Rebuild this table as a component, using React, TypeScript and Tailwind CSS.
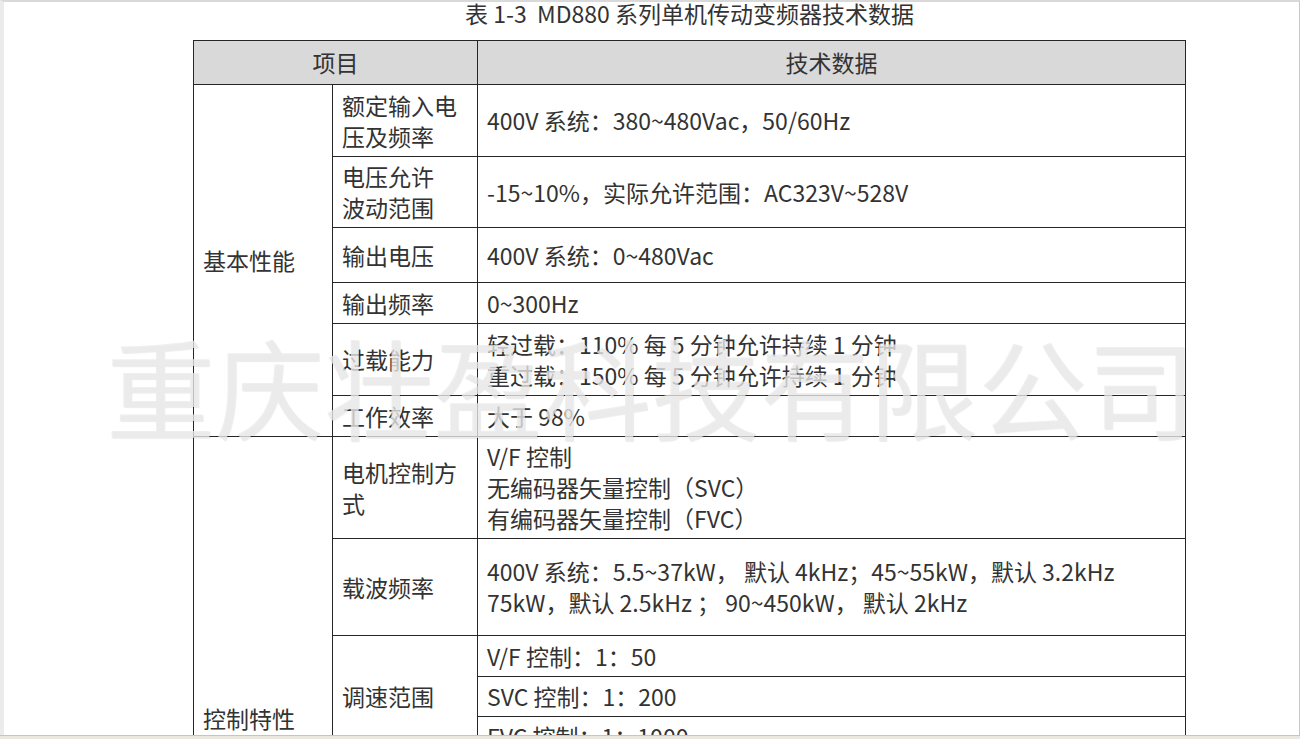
const font = { fontFamily: '"Noto Sans CJK SC", "Noto Sans", sans-serif' };

type Row = { label?: string[]; labelSpan?: number; value: string[]; h: number };

const basic: Row[] = [
  { label: ['额定输入电压及频率'], value: ['400V 系统：380~480Vac，50/60Hz'], h: 72 },
  { label: ['电压允许', '波动范围'], value: ['-15~10%，实际允许范围：AC323V~528V'], h: 71 },
  { label: ['输出电压'], value: ['400V 系统：0~480Vac'], h: 55 },
  { label: ['输出频率'], value: ['0~300Hz'], h: 41 },
  { label: ['过载能力'], value: ['轻过载：110% 每 5 分钟允许持续 1 分钟', '重过载：150% 每 5 分钟允许持续 1 分钟'], h: 72 },
  { label: ['工作效率'], value: ['大于 98%'], h: 41 },
];

const control: Row[] = [
  { label: ['电机控制方式'], value: ['V/F 控制', '无编码器矢量控制（SVC）', '有编码器矢量控制（FVC）'], h: 102 },
  { label: ['载波频率'], value: ['400V 系统：5.5~37kW， 默认 4kHz；45~55kW，默认 3.2kHz', '75kW，默认 2.5kHz ； 90~450kW， 默认 2kHz'], h: 97 },
  { label: ['调速范围'], labelSpan: 3, value: ['V/F 控制：1：50'], h: 41 },
  { value: ['SVC 控制：1：200'], h: 40 },
  { value: ['FVC 控制：1：1000'], h: 40 },
  { label: ['速度稳定', '精度'], value: ['SVC 控制：±0.2%', 'FVC 控制：±0.02%'], h: 72 },
  { label: ['转矩响应'], value: ['SVC 控制：<10ms', 'FVC 控制：<5ms'], h: 72 },
  { label: ['启动转矩'], value: ['V/F 控制：0.5Hz/150%', 'SVC 控制：0.25Hz/150%', 'FVC 控制：0Hz/200%'], h: 100 },
];

const cell = 'border border-[#262626] px-[9px] align-middle';

const Group = ({ title, rows }: { title: string; rows: Row[] }) => (
  <>
    {rows.map((r, i) => (
      <tr key={i} style={{ height: r.h }}>
        {i === 0 && (
          <td rowSpan={rows.length} className={cell}>
            {title}
          </td>
        )}
        {r.label && (
          <td rowSpan={r.labelSpan ?? 1} className={cell}>
            {r.label.map((l, j) => (
              <div key={j}>{l}</div>
            ))}
          </td>
        )}
        <td className={cell}>
          {r.value.map((v, j) => (
            <div key={j}>{v}</div>
          ))}
        </td>
      </tr>
    ))}
  </>
);

export default function App() {
  return (
    <div className="w-[1300px] h-[739px] flex flex-col bg-white overflow-hidden" style={font}>
      <div className="relative flex-1 min-h-0 overflow-hidden border-t-2 border-t-[#d9d9d9] border-l-4 border-l-[#ebebeb] border-r border-r-[#c8c8c8]">
        <div className="ml-[189px] w-[993px] text-[#333]">
          <div className="text-center text-[23px] leading-[22px] h-[38px]">
            表 1-3&nbsp; MD880 系列单机传动变频器技术数据
          </div>
          <table className="table-fixed w-[993px] border-collapse text-[23px] leading-[31px]">
            <colgroup>
              <col className="w-[139px]" />
              <col className="w-[145px]" />
              <col />
            </colgroup>
            <tbody>
              <tr className="h-[44px] bg-[#d9d9d9]">
                <td colSpan={2} className={`${cell} text-center`}>
                  项目
                </td>
                <td className={`${cell} text-center`}>技术数据</td>
              </tr>
              <Group title="基本性能" rows={basic} />
              <Group title="控制特性" rows={control} />
            </tbody>
          </table>
        </div>
        {/* watermark */}
        <div
          className="pointer-events-none absolute left-[102px] top-[318px] text-[109px] leading-[130px] whitespace-nowrap text-[rgba(235,235,235,0.78)]"
          style={{ textShadow: '1px 1px 1px rgba(0,0,0,0.08)' }}
        >
          重庆壮盈科技有限公司
        </div>
      </div>
      <div className="h-[4px] border-t border-t-[#c9c5bb] bg-[#ebe8e1]" />
    </div>
  );
}
